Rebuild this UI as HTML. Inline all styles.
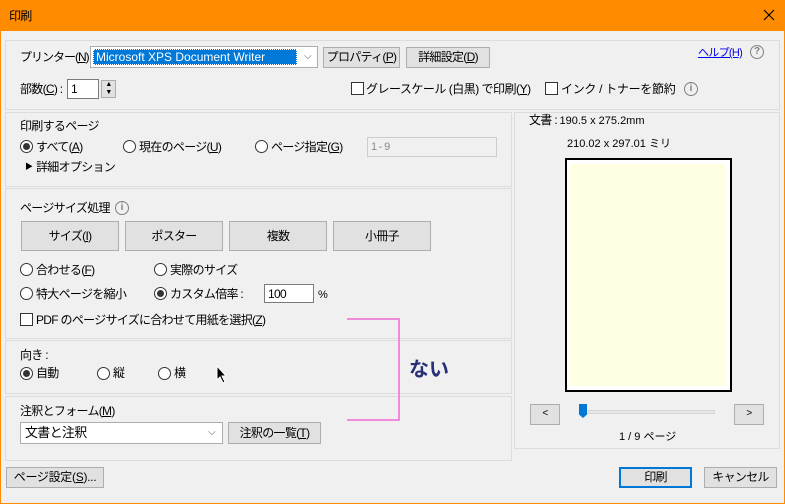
<!DOCTYPE html>
<html><head><meta charset="utf-8">
<style>
*{box-sizing:border-box;margin:0;padding:0}
body{width:785px;height:504px;background:#f0f0f0;font-family:"Liberation Sans","Noto Sans CJK JP",sans-serif;font-size:12px;letter-spacing:-0.7px;color:#000;position:relative;overflow:hidden}
.a{position:absolute;white-space:nowrap;line-height:14px}
.frame{position:absolute;left:0;top:0;width:785px;height:504px;border:1px solid #ff8c00;pointer-events:none}
.title{position:absolute;left:0;top:0;width:785px;height:31px;background:#ff8c00}
.grp{position:absolute;border:1px solid #dcdcdc}
.btn{position:absolute;background:#e1e1e1;border:1px solid #adadad;text-align:center;line-height:18px;white-space:nowrap}
.inp{position:absolute;background:#fff;border:1px solid #7a7a7a}
.rad{position:absolute;width:13px;height:13px;border:1px solid #333;border-radius:50%;background:#fff}
.rad.on::after{content:"";position:absolute;left:2px;top:2px;width:7px;height:7px;border-radius:50%;background:#333}
.chk{position:absolute;width:13px;height:13px;border:1px solid #333;background:#fff}
.info{position:absolute;width:14px;height:14px;border:1.5px solid #808080;border-radius:50%;color:#808080;font-size:10px;line-height:11px;text-align:center;font-weight:bold;letter-spacing:0}
u{text-decoration:underline}
</style></head><body>
<div class="title"></div>
<div class="a" style="left:9px;top:9px">印刷</div>
<svg style="position:absolute;left:763px;top:9px" width="12" height="12"><path d="M1 1L11 11M11 1L1 11" stroke="#000" stroke-width="1.2"/></svg>

<div class="grp" style="left:5px;top:40px;width:775px;height:70px"></div>
<div class="a" style="left:20px;top:50px;letter-spacing:-1px">プリンター(<u>N</u>) :</div>
<div class="inp" style="left:90px;top:46px;width:228px;height:22px;border-color:#adadad"></div>
<div style="position:absolute;left:93px;top:49px;width:204px;height:16px;background:#0078d7;border:1px dotted #fff"></div>
<div class="a" style="left:96px;top:50px;color:#fff;letter-spacing:0">Microsoft XPS Document Writer</div>
<div class="a" style="left:304px;top:50px;color:#555;font-size:10px">⌵</div>
<div class="btn" style="left:323px;top:47px;width:77px;height:21px">プロパティ(<u>P</u>)</div>
<div class="btn" style="left:406px;top:47px;width:84px;height:21px">詳細設定(<u>D</u>)</div>
<div class="a" style="left:698px;top:46px;color:#0000ee;text-decoration:underline;font-size:11px">ヘルプ(H)</div>
<div class="info" style="left:750px;top:45px;font-size:10px">?</div>

<div class="a" style="left:20px;top:82px">部数(<u>C</u>) :</div>
<div class="inp" style="left:67px;top:79px;width:32px;height:20px"></div>
<div class="a" style="left:71px;top:82px">1</div>
<div class="btn" style="left:101px;top:80px;width:15px;height:18px;font-size:7px;line-height:8px">▲<br>▼</div>
<div class="chk" style="left:351px;top:82px"></div>
<div class="a" style="left:366px;top:82px;letter-spacing:-0.5px">グレースケール (白黒) で印刷(<u>Y</u>)</div>
<div class="chk" style="left:545px;top:82px"></div>
<div class="a" style="left:561px;top:82px;letter-spacing:-0.3px">インク / トナーを節約</div>
<div class="info" style="left:684px;top:82px">i</div>

<div class="grp" style="left:5px;top:112px;width:507px;height:75px"></div>
<div class="a" style="left:20px;top:119px">印刷するページ</div>
<div class="rad on" style="left:20px;top:140px"></div><div class="a" style="left:36px;top:140px">すべて(<u>A</u>)</div>
<div class="rad" style="left:123px;top:140px"></div><div class="a" style="left:139px;top:140px">現在のページ(<u>U</u>)</div>
<div class="rad" style="left:255px;top:140px"></div><div class="a" style="left:271px;top:140px">ページ指定(<u>G</u>)</div>
<div class="inp" style="left:367px;top:137px;width:130px;height:20px;border-color:#ccc;background:#f0f0f0"></div>
<div class="a" style="left:371px;top:140px;color:#888;font-size:11px">1 - 9</div>
<div class="a" style="left:25px;top:160px;font-size:8px">▶</div>
<div class="a" style="left:36px;top:160px">詳細オプション</div>

<div class="grp" style="left:5px;top:188px;width:507px;height:151px"></div>
<div class="a" style="left:20px;top:201px">ページサイズ処理</div>
<div class="info" style="left:115px;top:201px">i</div>
<div class="btn" style="left:21px;top:221px;width:98px;height:30px;line-height:28px">サイズ(<u>I</u>)</div>
<div class="btn" style="left:125px;top:221px;width:98px;height:30px;line-height:28px">ポスター</div>
<div class="btn" style="left:229px;top:221px;width:98px;height:30px;line-height:28px">複数</div>
<div class="btn" style="left:333px;top:221px;width:98px;height:30px;line-height:28px">小冊子</div>
<div class="rad" style="left:20px;top:263px"></div><div class="a" style="left:36px;top:263px">合わせる(<u>F</u>)</div>
<div class="rad" style="left:154px;top:263px"></div><div class="a" style="left:170px;top:263px">実際のサイズ</div>
<div class="rad" style="left:20px;top:287px"></div><div class="a" style="left:36px;top:287px">特大ページを縮小</div>
<div class="rad on" style="left:154px;top:287px"></div><div class="a" style="left:170px;top:287px">カスタム倍率 :</div>
<div class="inp" style="left:264px;top:284px;width:50px;height:19px"></div>
<div class="a" style="left:268px;top:287px">100</div>
<div class="a" style="left:318px;top:288px;font-size:11px">%</div>
<div class="chk" style="left:20px;top:313px"></div>
<div class="a" style="left:36px;top:313px">PDF のページサイズに合わせて用紙を選択(<u>Z</u>)</div>

<div class="grp" style="left:5px;top:340px;width:507px;height:54px"></div>
<div class="a" style="left:20px;top:348px">向き :</div>
<div class="rad on" style="left:20px;top:367px"></div><div class="a" style="left:36px;top:366px">自動</div>
<div class="rad" style="left:97px;top:367px"></div><div class="a" style="left:113px;top:366px">縦</div>
<div class="rad" style="left:158px;top:367px"></div><div class="a" style="left:174px;top:366px">横</div>
<svg style="position:absolute;left:216px;top:365px" width="12" height="19" viewBox="0 0 12 19"><path d="M1 1 L1 15 L4 12 L7 18 L9 17 L6 11 L10 11 Z" fill="#000" stroke="#fff" stroke-width="1"/></svg>

<div class="grp" style="left:5px;top:396px;width:507px;height:65px"></div>
<div class="a" style="left:20px;top:404px">注釈とフォーム(<u>M</u>)</div>
<div class="inp" style="left:20px;top:422px;width:203px;height:22px;border-color:#adadad"></div>
<div class="a" style="left:25px;top:426px;font-size:13px">文書と注釈</div>
<div class="a" style="left:208px;top:426px;color:#555;font-size:10px">⌵</div>
<div class="btn" style="left:228px;top:422px;width:93px;height:22px;line-height:20px">注釈の一覧(<u>T</u>)</div>

<div class="btn" style="left:6px;top:467px;width:98px;height:21px;letter-spacing:-0.3px">ページ設定(<u>S</u>)...</div>

<svg style="position:absolute;left:0;top:0" width="785" height="504"><path d="M347 319 H399 V420 H347" fill="none" stroke="#f08ada" stroke-width="2"/></svg>
<div class="a" style="left:409px;top:359px;font-size:20px;line-height:22px;font-weight:bold;color:#283078;letter-spacing:0">ない</div>

<div class="grp" style="left:514px;top:112px;width:266px;height:337px"></div>
<div class="a" style="left:529px;top:113px">文書 : <span style="font-size:11px;letter-spacing:0">190.5 x 275.2mm</span></div>
<div class="a" style="left:567px;top:137px;font-size:11px;letter-spacing:0">210.02 x 297.01 ミリ</div>
<div style="position:absolute;left:565px;top:158px;width:167px;height:234px;border:2px solid #000;background:#fff"></div>
<div style="position:absolute;left:570px;top:164px;width:156px;height:222px;background:#ffffe4"></div>
<div class="btn" style="left:530px;top:404px;width:30px;height:21px;font-size:10px">&lt;</div>
<div style="position:absolute;left:579px;top:410px;width:136px;height:4px;background:#e7e7e7;border:1px solid #d6d6d6"></div>
<div style="position:absolute;left:579px;top:404px;width:8px;height:14px;background:#0078d7;clip-path:polygon(0 0,100% 0,100% 75%,50% 100%,0 75%)"></div>
<div class="btn" style="left:734px;top:404px;width:30px;height:21px;font-size:10px">&gt;</div>
<div class="a" style="left:619px;top:430px;font-size:11px;letter-spacing:0">1 / 9 ページ</div>

<div class="btn" style="left:619px;top:467px;width:73px;height:21px;border:2px solid #0078d7;line-height:17px">印刷</div>
<div class="btn" style="left:704px;top:467px;width:73px;height:21px">キャンセル</div>
<div class="frame"></div>
</body></html>
